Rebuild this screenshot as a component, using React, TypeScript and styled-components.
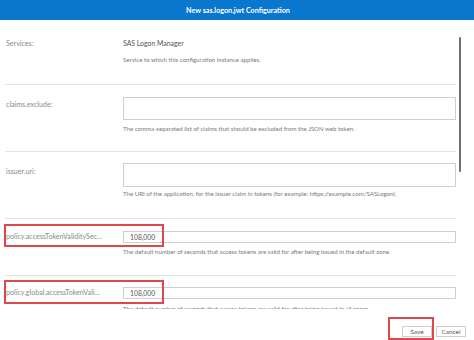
import React from "react";
import styled, { createGlobalStyle } from "styled-components";

const GlobalStyle = createGlobalStyle`
  html, body {
    margin: 0;
    padding: 0;
    background: #ffffff;
  }
  body {
    font-family: Lato, "Open Sans", "Liberation Sans", sans-serif;
  }
`;

const Dialog = styled.div`
  width: 474px;
  height: 340px;
  display: flex;
  flex-direction: column;
  background: #ffffff;
  overflow: hidden;
`;

const Header = styled.div`
  height: 20px;
  flex: 0 0 20px;
  background: #0a77cf;
  color: #ffffff;
  font-weight: 700;
  font-size: 7.2px;
  display: flex;
  align-items: center;
  justify-content: center;
  padding-left: 2px;
`;

const Body = styled.div`
  flex: 1;
  display: flex;
  overflow: hidden;
`;

const Content = styled.div`
  width: 451px;
  margin-left: 5px;
  display: flex;
  flex-direction: column;
`;

const ScrollTrack = styled.div`
  width: 2px;
  margin-left: 3px;
  display: flex;
  flex-direction: column;
`;

const ScrollThumb = styled.div`
  width: 2px;
  height: 135px;
  margin-top: 17px;
  background: #6e6e6e;
  border-radius: 1px;
`;

const Section = styled.div<{ $top: number; $height: number; $last?: boolean }>`
  position: relative;
  flex: 0 0 auto;
  height: ${(p) => p.$height}px;
  box-sizing: border-box;
  padding-top: ${(p) => p.$top}px;
  border-bottom: ${(p) => (p.$last ? "none" : "1px solid #e4e4e4")};
  display: grid;
  grid-template-columns: 118px 1fr;
  align-content: start;
`;

const Label = styled.div<{ $offset: number }>`
  padding-left: 1px;
  padding-top: ${(p) => p.$offset}px;
  font-size: 7.1px;
  line-height: 10px;
  color: #8a8a8a;
  white-space: nowrap;
  overflow: hidden;
`;

const Field = styled.div`
  display: flex;
  flex-direction: column;
`;

const Value = styled.div`
  font-size: 6.9px;
  line-height: 10px;
  color: #555555;
`;

const Input = styled.div<{ $height: number }>`
  height: ${(p) => p.$height}px;
  box-sizing: border-box;
  border: 1px solid #cfcfcf;
  background: #ffffff;
  font-size: 6.8px;
  color: #555555;
  padding-left: 6px;
  display: flex;
  align-items: center;
`;

const Help = styled.div<{ $gap: number }>`
  margin-top: ${(p) => p.$gap}px;
  font-size: 6.1px;
  line-height: 8px;
  color: #7a7a7a;
  white-space: nowrap;
`;

const Highlight = styled.div<{ $top: number; $left: number; $width: number; $height: number }>`
  position: absolute;
  top: ${(p) => p.$top}px;
  left: ${(p) => p.$left}px;
  width: ${(p) => p.$width}px;
  height: ${(p) => p.$height}px;
  box-sizing: border-box;
  border: 2px solid #e0474c;
  pointer-events: none;
`;

const Footer = styled.div`
  height: 28px;
  flex: 0 0 28px;
  background: #ffffff;
  display: flex;
  justify-content: flex-end;
  align-items: flex-end;
  gap: 4px;
  padding: 0 8px 3px 0;
`;

const ButtonWrap = styled.div`
  position: relative;
`;

const Button = styled.div`
  width: 30px;
  height: 11px;
  box-sizing: border-box;
  border: 1px solid #cfcfcf;
  background: #ffffff;
  font-size: 6.4px;
  color: #555555;
  display: flex;
  align-items: center;
  justify-content: center;
`;

export default function App() {
  return (
    <>
      <GlobalStyle />
      <Dialog>
        <Header>New sas.logon.jwt Configuration</Header>
        <Body>
          <Content>
            <Section $top={18} $height={65}>
              <Label $offset={1}>Services:</Label>
              <Field>
                <Value>SAS Logon Manager</Value>
                <Help $gap={8}>Service to which this configuration instance applies.</Help>
              </Field>
            </Section>

            <Section $top={12} $height={67}>
              <Label $offset={3}>claims.exclude:</Label>
              <Field>
                <Input $height={23} />
                <Help $gap={5}>
                  The comma-separated list of claims that should be excluded from the JSON web token.
                </Help>
              </Field>
            </Section>

            <Section $top={11} $height={67}>
              <Label $offset={4}>issuer.uri:</Label>
              <Field>
                <Input $height={24} />
                <Help $gap={3}>
                  The URI of the application, for the issuer claim in tokens (for example: https://example.com/SASLogon).
                </Help>
              </Field>
            </Section>

            <Section $top={12} $height={57}>
              <Label $offset={1}>policy.accessTokenValiditySec...</Label>
              <Field>
                <Input $height={12}>108,000</Input>
                <Help $gap={5}>
                  The default number of seconds that access tokens are valid for after being issued in the default zone.
                </Help>
              </Field>
              <Highlight $top={5} $left={-1} $width={160} $height={23} />
            </Section>

            <Section $top={11} $height={60} $last>
              <Label $offset={1}>policy.global.accessTokenVali...</Label>
              <Field>
                <Input $height={12}>108,000</Input>
                <Help $gap={6}>
                  The default number of seconds that access tokens are valid for after being issued in all zones.
                </Help>
              </Field>
              <Highlight $top={4} $left={-1} $width={160} $height={24} />
            </Section>
          </Content>
          <ScrollTrack>
            <ScrollThumb />
          </ScrollTrack>
        </Body>
        <Footer>
          <ButtonWrap>
            <Button>Save</Button>
            <Highlight $top={-9} $left={-14} $width={46} $height={23} />
          </ButtonWrap>
          <Button>Cancel</Button>
        </Footer>
      </Dialog>
    </>
  );
}
